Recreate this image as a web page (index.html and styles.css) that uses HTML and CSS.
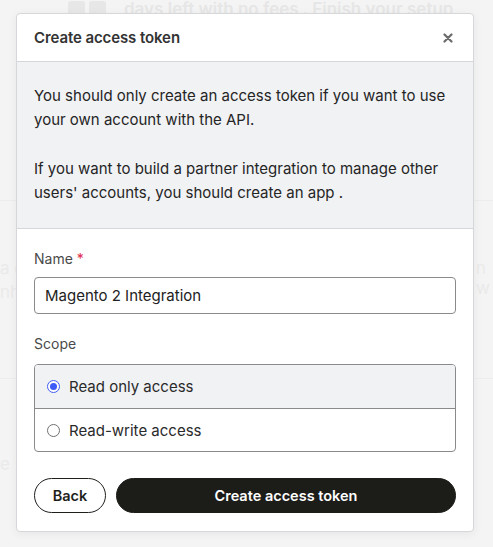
FILE: index.html
```html
<!DOCTYPE html>
<html lang="en">
<head>
<meta charset="utf-8">
<title>Create access token</title>
<link rel="stylesheet" href="styles.css">
</head>
<body>
<div class="backdrop" aria-hidden="true">
  <div class="ghost-top">
    <span class="ghost-icon"></span><span class="ghost-icon"></span>
    <span class="ghost-text">days left with no fees . Finish your setup</span>
  </div>
  <div class="ghost-line l1"></div>
  <div class="ghost-line l2"></div>
  <div class="ghost-word g1">a c</div>
  <div class="ghost-word g2">nha</div>
  <div class="ghost-word g3">n w</div>
  <div class="ghost-word g4">e 'F</div>
</div>

<div class="modal" role="dialog" aria-labelledby="modal-title">
  <div class="modal-header">
    <h2 class="modal-title" id="modal-title">Create access token</h2>
    <button class="close" aria-label="Close">
      <svg width="10" height="10" viewBox="0 0 10 10"><path d="M1.5 1.5 L8.5 8.5 M8.5 1.5 L1.5 8.5" stroke="#6b6b6b" stroke-width="2.2" stroke-linecap="round"/></svg>
    </button>
  </div>
  <div class="modal-info">
    <p>You should only create an access token if you want to use your own account with the API.</p>
    <p>If you want to build a partner integration to manage other users' accounts, you should create an app .</p>
  </div>
  <div class="modal-body">
    <label class="field-label" for="name">Name <span class="req">*</span></label>
    <input class="text-input" id="name" type="text" value="Magento 2 Integration">
    <div class="field-label scope-label">Scope</div>
    <div class="radio-group">
      <label class="radio-row selected">
        <span class="radio checked"></span>
        <span>Read only access</span>
      </label>
      <label class="radio-row">
        <span class="radio"></span>
        <span>Read-write access</span>
      </label>
    </div>
    <div class="actions">
      <button class="btn btn-back">Back</button>
      <button class="btn btn-primary">Create access token</button>
    </div>
  </div>
</div>
</body>
</html>
```
FILE: styles.css
```css
* { box-sizing: border-box; }
html, body { margin: 0; padding: 0; }
body {
  width: 493px;
  height: 547px;
  overflow: hidden;
  background: #f4f4f4;
  font-family: Inter, "Noto Sans", sans-serif;
  color: #252525;
  position: relative;
  padding-top: 13px;
  padding-left: 16px;
}

.backdrop {
  position: absolute;
  inset: 0;
  z-index: 0;
  color: #ececec;
  font-size: 17px;
}
.ghost-top {
  position: absolute;
  top: 1px;
  left: 68px;
  display: flex;
  align-items: flex-start;
  gap: 4px;
  color: #e6e6e6;
  font-weight: 600;
  font-size: 17px;
  line-height: 17px;
}
.ghost-icon {
  display: inline-block;
  width: 17px;
  height: 17px;
  border-radius: 3px;
  background: #e7e7e7;
}
.ghost-text { margin-left: 14px; }
.ghost-line {
  position: absolute;
  left: 0;
  right: 0;
  height: 1px;
  background: #ededed;
}
.ghost-line.l1 { top: 200px; }
.ghost-line.l2 { top: 378px; }
.ghost-word { position: absolute; color: #eaeaea; }
.ghost-word.g1 { left: 0; top: 258px; }
.ghost-word.g2 { left: 0; top: 282px; }
.ghost-word.g3 { left: 476px; top: 258px; }
.ghost-word.g4 { left: 0; top: 454px; }

.modal {
  position: relative;
  z-index: 1;
  width: 458px;
  height: 519px;
  background: #fff;
  border: 1px solid #d6d7da;
  border-radius: 4px;
  box-shadow: 0 2px 10px rgba(0,0,0,0.06);
  overflow: hidden;
  display: flex;
  flex-direction: column;
}

.modal-header {
  height: 48px;
  display: flex;
  align-items: center;
  justify-content: space-between;
  padding: 0 17px 0 17px;
  border-bottom: 1px solid #d6d7da;
  flex-shrink: 0;
}
.modal-title {
  margin: 0;
  font-size: 15px;
  font-weight: 600;
  color: #333;
  letter-spacing: -0.1px;
}
.close {
  border: 0;
  background: none;
  padding: 0;
  width: 14px;
  height: 14px;
  display: flex;
  align-items: center;
  justify-content: center;
  cursor: pointer;
  margin-right: 1px;
}

.modal-info {
  background: #f1f2f4;
  padding: 22px 17px 23px;
  border-bottom: 1px solid #d6d7da;
  font-size: 15px;
  line-height: 24px;
  color: #252525;
  flex-shrink: 0;
}
.modal-info p { margin: 0; }
.modal-info p + p { margin-top: 25px; }

.modal-body {
  padding: 20px 17px 18px;
  display: flex;
  flex-direction: column;
}
.field-label {
  font-size: 14px;
  line-height: 20px;
  color: #4a4a4a;
  margin-bottom: 8px;
}
.req { color: #e0284a; }
.text-input {
  height: 37px;
  border: 1px solid #8a8a8a;
  border-radius: 4px;
  padding: 0 10px;
  font-family: inherit;
  font-size: 15px;
  color: #222;
  background: #fff;
  outline: none;
}
.scope-label { margin-top: 20px; margin-bottom: 10px; }

.radio-group {
  border: 1px solid #8a8a8a;
  border-radius: 4px;
  overflow: hidden;
}
.radio-row {
  height: 43px;
  display: flex;
  align-items: center;
  gap: 9px;
  padding-left: 12px;
  font-size: 15px;
  color: #2a2a2a;
}
.radio-row + .radio-row { border-top: 1px solid #8a8a8a; }
.radio-row.selected { background: #f1f2f4; }
.radio {
  width: 13px;
  height: 13px;
  border-radius: 50%;
  border: 1px solid #707070;
  background: #fff;
  display: inline-block;
  position: relative;
  flex-shrink: 0;
}
.radio.checked {
  border-color: #3f5bf6;
}
.radio.checked::after {
  content: "";
  position: absolute;
  inset: 2px;
  border-radius: 50%;
  background: #3f5bf6;
}

.actions {
  margin-top: 26px;
  display: flex;
  gap: 10px;
}
.btn {
  height: 35px;
  border-radius: 18px;
  font-family: inherit;
  font-size: 14.5px;
  font-weight: 600;
  cursor: pointer;
}
.btn-back {
  width: 72px;
  background: #fff;
  border: 1px solid #1f1f1c;
  color: #1f1f1c;
}
.btn-primary {
  flex: 1;
  background: #1c1c19;
  border: 1px solid #1c1c19;
  color: #fff;
}
```
